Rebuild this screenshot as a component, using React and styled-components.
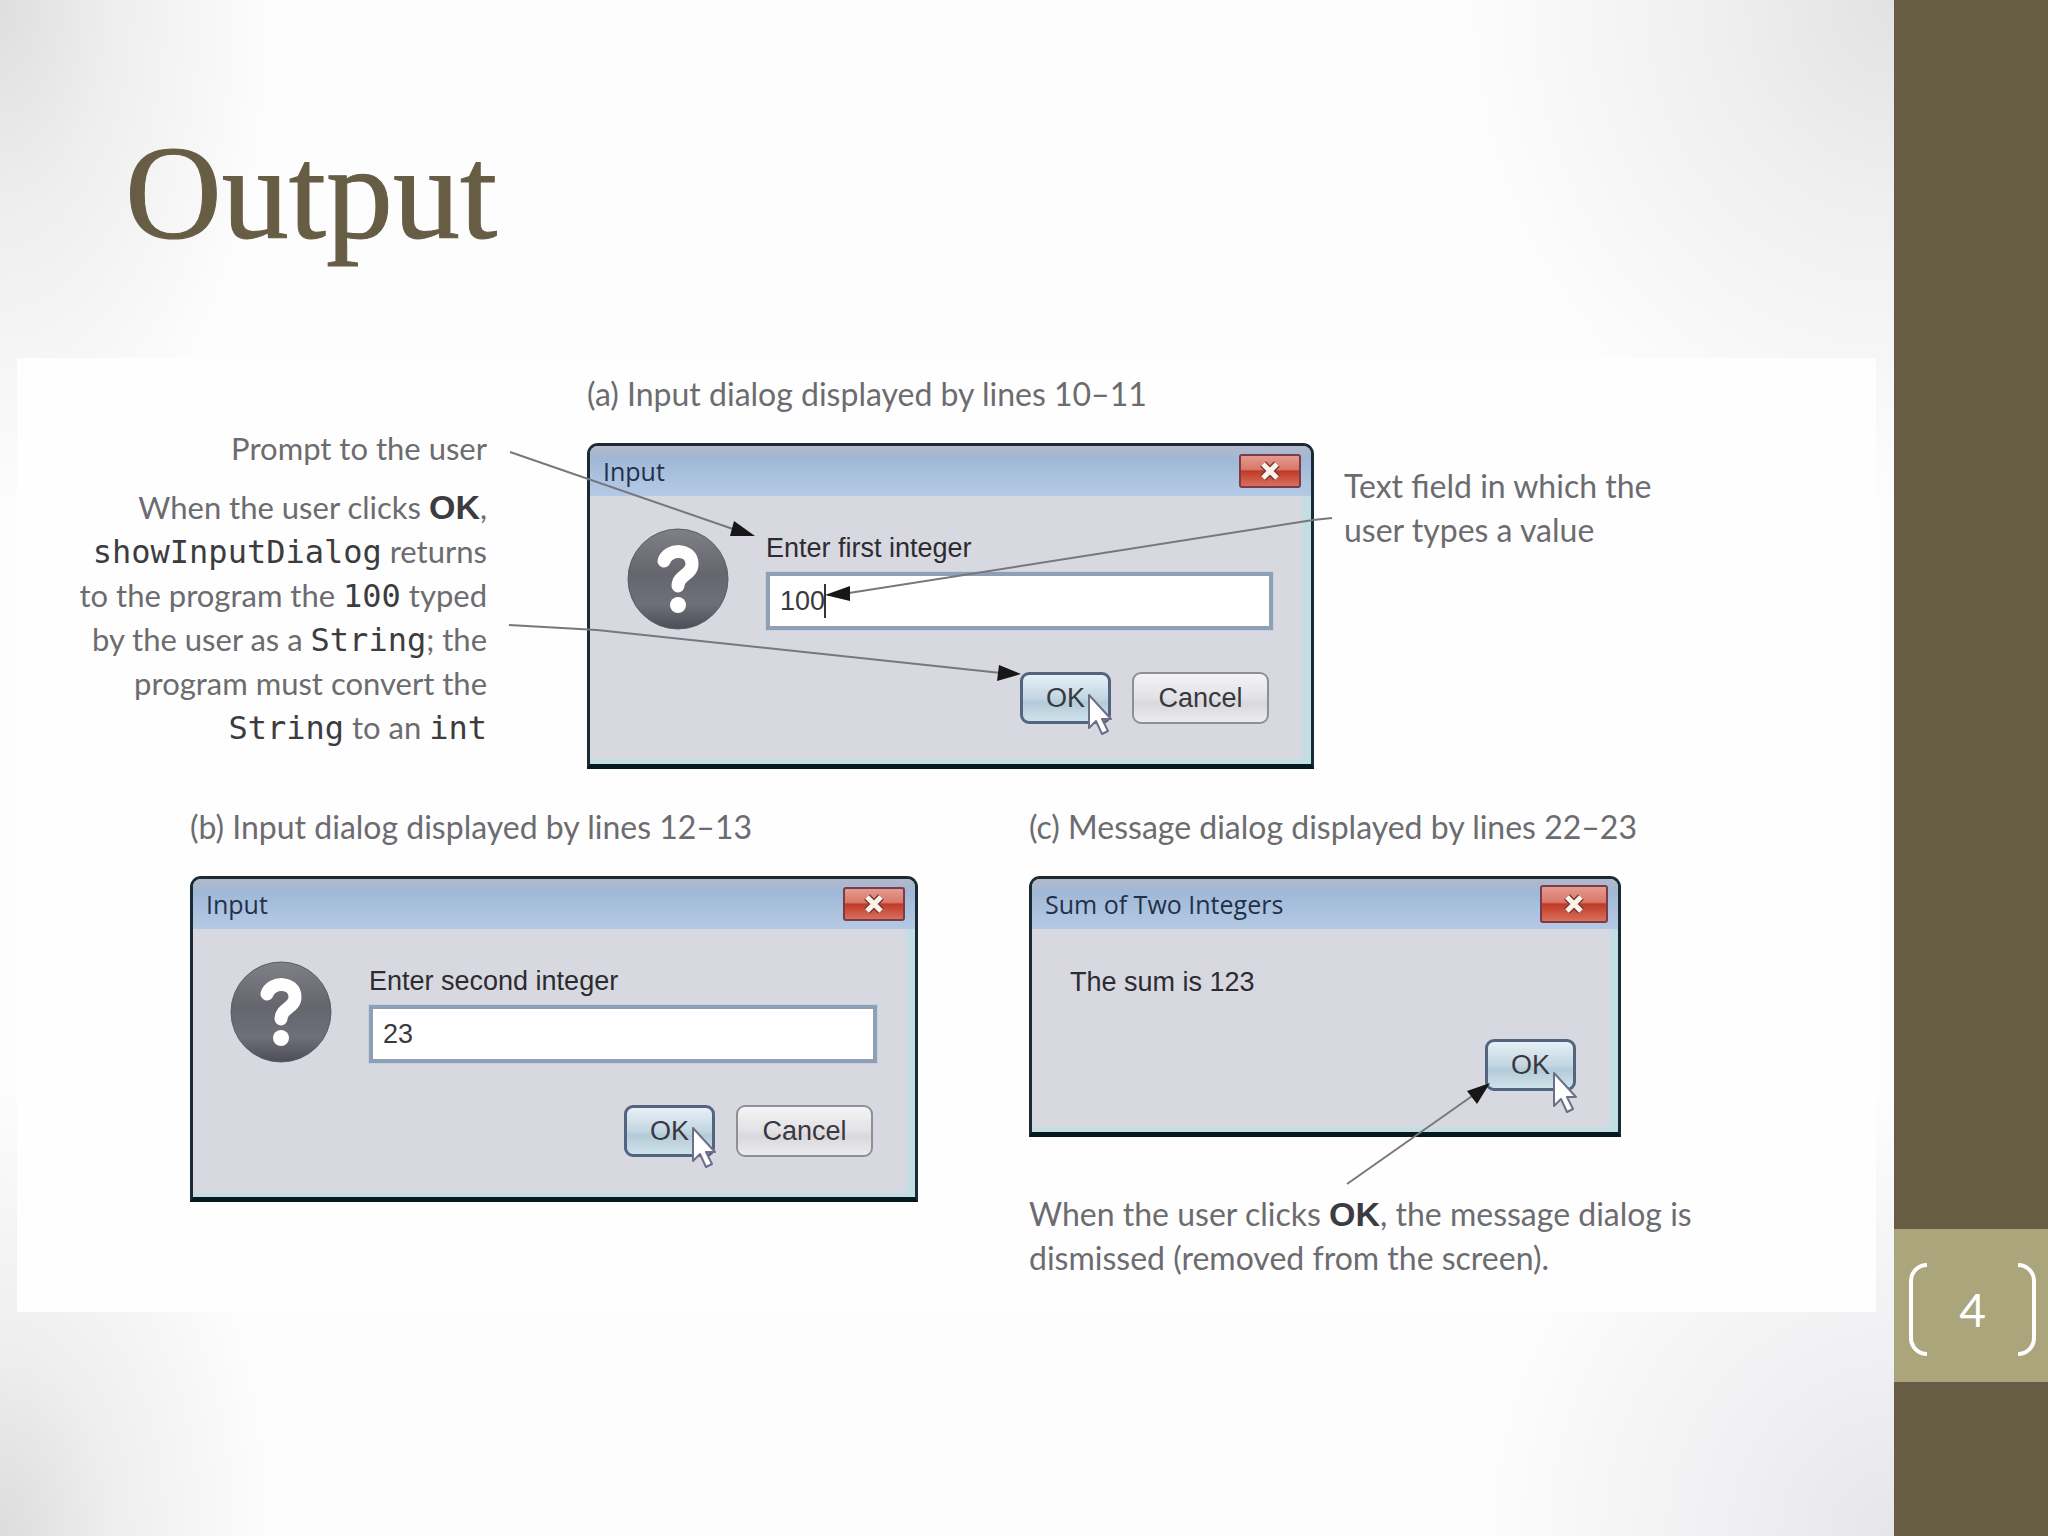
import React from 'react';
import styled, { createGlobalStyle } from 'styled-components';

const Cursor = ({ low }) => (
    <CursorSvg viewBox="0 0 24 42" aria-hidden="true" $low={low}>
        <path
            d="M1 1 L1 34 L8 27 L14 40 L20 37 L14 25 L23 25 Z"
            fill="#fff"
            stroke="#6d6f88"
            strokeWidth="2"
            strokeLinejoin="round"
        />
    </CursorSvg>
);

const QuestionIcon = () => (
    <IconSvg viewBox="0 0 102 102" aria-hidden="true">
        <defs>
            <linearGradient id="ball" x1="0" y1="0" x2="0" y2="1">
                <stop offset="0" stopColor="#808187" />
                <stop offset="0.45" stopColor="#64656d" />
                <stop offset="0.75" stopColor="#6e6f79" />
                <stop offset="1" stopColor="#4c4d56" />
            </linearGradient>
        </defs>
        <circle cx="51" cy="51" r="50" fill="url(#ball)" stroke="#5b5c64" strokeWidth="1" />
        <path
            d="M37 33 C41 20 65 20 65 36 C65 47 51 47 51 58"
            fill="none"
            stroke="#fff"
            strokeWidth="13"
            strokeLinecap="round"
            strokeLinejoin="round"
        />
        <circle cx="51" cy="77" r="8" fill="#fff" />
    </IconSvg>
);

const TitleBar = ({ title, wideClose }) => (
    <Bar>
        <BarTitle>{title}</BarTitle>
        <CloseButton type="button" aria-label="Close" $wide={wideClose}>
            <svg width="26" height="22" viewBox="0 0 26 22" aria-hidden="true">
                <path d="M6 4 L20 18 M20 4 L6 18" stroke="#7a3c3c" strokeWidth="8" />
                <path d="M6 4 L20 18 M20 4 L6 18" stroke="#fbf3ea" strokeWidth="5" />
            </svg>
        </CloseButton>
    </Bar>
);

const OkButton = ({ lowCursor }) => (
    <ButtonWrap>
        <DialogButton type="button" $primary>OK</DialogButton>
        <Cursor low={lowCursor} />
    </ButtonWrap>
);

const InputDialog = ({ id, label, value }) => (
    <Window>
        <TitleBar title="Input" />
        <InputBody>
            <QuestionIcon />
            <Field>
                <FieldLabel htmlFor={id}>{label}</FieldLabel>
                <FieldInput id={id} type="text" defaultValue={value} />
            </Field>
        </InputBody>
        <ButtonRow>
            <OkButton />
            <DialogButton type="button">Cancel</DialogButton>
        </ButtonRow>
    </Window>
);

const MessageDialog = () => (
    <Window>
        <TitleBar title="Sum of Two Integers" wideClose />
        <Message>The sum is 123</Message>
        <ButtonRow $message>
            <OkButton lowCursor />
        </ButtonRow>
    </Window>
);

// pointer lines from the notes to the parts of the dialogs
const arrows = [
    { line: 'M493 94 L716 171', head: 'M738 178 L713 178 L717 163 Z' },
    { line: 'M492 267 L580 272 L984 315', head: 'M1004 316 L980 323 L982 307 Z' },
    { line: 'M1315 160 L1296 162 L832 235', head: 'M808 237 L833 228 L833 243 Z' },
    { line: 'M1330 826 L1458 736', head: 'M1473 725 L1460 746 L1450 733 Z' },
];

const Arrows = () => (
    <ArrowLayer aria-hidden="true">
        {arrows.map((arrow) => (
            <g key={arrow.line}>
                <path d={arrow.line} fill="none" stroke="#77777d" strokeWidth="2" />
                <path d={arrow.head} fill="#17171a" />
            </g>
        ))}
        {/* text caret */}
        <path d="M808 226 V260" stroke="#333" strokeWidth="2" />
    </ArrowLayer>
);

const App = () => {
    return (
        <React.Fragment>
            <GlobalStyle />
            <Slide>
                <Main>
                    <Title>Output</Title>
                    <Panel>
                        <TopRow>
                            <LeftNotes>
                                <Note $small>Prompt to the user</Note>
                                <Note $small>
                                    When the user clicks <Key>OK</Key>,<br />
                                    <Code>showInputDialog</Code> returns<br />
                                    to the program the <Code>100</Code> typed<br />
                                    by the user as a <Code>String</Code>; the<br />
                                    program must convert the<br />
                                    <Code>String</Code> to an <Code>int</Code>
                                </Note>
                            </LeftNotes>
                            <Figure $size="727px">
                                <Caption>(a) Input dialog displayed by lines 10–11</Caption>
                                <InputDialog id="first" label="Enter first integer" value="100" />
                            </Figure>
                            <RightNotes>
                                <Note>
                                    Text field in which the<br />
                                    user types a value
                                </Note>
                            </RightNotes>
                        </TopRow>
                        <BottomRow>
                            <Figure $size="728px">
                                <Caption>(b) Input dialog displayed by lines 12–13</Caption>
                                <InputDialog id="second" label="Enter second integer" value="23" />
                            </Figure>
                            <Figure $size="592px">
                                <Caption>(c) Message dialog displayed by lines 22–23</Caption>
                                <MessageDialog />
                                <BelowNote>
                                    When the user clicks <Key>OK</Key>, the message dialog is<br />
                                    dismissed (removed from the screen).
                                </BelowNote>
                            </Figure>
                        </BottomRow>
                        <Arrows />
                    </Panel>
                </Main>
                <Rail>
                    <PageBox>
                        <Bracket />
                        <PageNumber>4</PageNumber>
                        <Bracket $right />
                    </PageBox>
                </Rail>
            </Slide>
        </React.Fragment>
    );
};

export default App;

const GlobalStyle = createGlobalStyle`
    * {
        box-sizing: border-box;
    }
    body {
        margin: 0;
        background: #fdfdfd;
    }
`;

const Slide = styled.div`
    display: flex;
    min-height: 100vh;
    font-family: Lato, "Liberation Sans", sans-serif;
`;

const Main = styled.main`
    flex: 1;
    padding: 113px 18px 0 17px;
    background:
        radial-gradient(ellipse 280px 520px at 0 0, #dedede, #eeeeee 40%, #fdfdfd00),
        radial-gradient(ellipse 280px 460px at 0 100%, #dcdcdc, #eeeeee 40%, #fdfdfd00),
        radial-gradient(ellipse 440px 500px at 100% 0, #e2e2e2, #efefef 40%, #fdfdfd00),
        radial-gradient(ellipse 420px 440px at 100% 100%, #e6e5e7, #f0eff1 40%, #fdfdfd00),
        #fdfdfd;
`;

const Title = styled.h1`
    margin: 0 0 85px;
    padding-left: 108px;
    font-family: "Liberation Serif", serif;
    font-size: 134px;
    font-weight: 400;
    line-height: 160px;
    color: #675d45;
    -webkit-text-stroke: 1px #675d45;
`;

const Panel = styled.div`
    position: relative;
    padding: 14px 0 32px;
    background: #fefefe;
`;

const TopRow = styled.div`
    display: flex;
`;

const BottomRow = styled.div`
    display: flex;
    gap: 111px;
    margin-top: 36px;
    padding-left: 173px;
`;

const LeftNotes = styled.div`
    display: flex;
    flex-direction: column;
    gap: 15px;
    width: 470px;
    margin-right: 100px;
    padding-top: 54px;
    text-align: right;
`;

const RightNotes = styled.div`
    padding: 92px 0 0 30px;
`;

const Figure = styled.section`
    width: ${(props) => props.$size};
`;

const Note = styled.p`
    margin: 0;
    font-size: ${(props) => (props.$small ? '31px' : '32px')};
    line-height: 44px;
    white-space: nowrap;
    color: #6c6c70;
`;

const BelowNote = styled(Note)`
    margin-top: 55px;
`;

const Caption = styled.h2`
    margin: 0 0 27px;
    font-size: 32px;
    font-weight: 400;
    line-height: 44px;
    white-space: nowrap;
    color: #6c6c70;
`;

const Key = styled.b`
    font-family: "Liberation Sans", sans-serif;
    font-size: 34px;
    line-height: 1;
    color: #3c3c40;
`;

const Code = styled.code`
    font-family: "DejaVu Sans Mono", monospace;
    font-size: 32px;
    line-height: 1;
    color: #3c3c40;
`;

const Window = styled.div`
    display: flex;
    flex-direction: column;
    border: 3px solid #1b2a33;
    border-bottom: 5px solid #06191f;
    border-radius: 11px 11px 0 0;
    background: #d8d8e1;
    box-shadow: inset -10px -6px 4px -2px #bfdfe2;
    font-family: "Liberation Sans", sans-serif;
`;

const Bar = styled.div`
    display: flex;
    align-items: center;
    justify-content: space-between;
    height: 50px;
    padding: 0 10px 0 13px;
    border-radius: 8px 8px 0 0;
    background: linear-gradient(#b4b9c8, #9fb8d6 25%, #a9c0dd 55%, #b4c9e4);
`;

const BarTitle = styled.span`
    font-family: "Open Sans", sans-serif;
    font-size: 25px;
    line-height: 34px;
    color: #22304a;
`;

const CloseButton = styled.button`
    display: flex;
    align-items: center;
    justify-content: center;
    width: ${(props) => (props.$wide ? '68px' : '62px')};
    height: ${(props) => (props.$wide ? '38px' : '34px')};
    padding: 0;
    border: 2px solid #7c3b4a;
    border-radius: 3px;
    background: linear-gradient(#e59a8e, #d9786a 45%, #bf3a26 50%, #d8705c);
`;

const InputBody = styled.div`
    display: flex;
    gap: 37px;
    padding: 30px 38px 0 37px;
`;

const IconSvg = styled.svg`
    flex: none;
    width: 102px;
    height: 102px;
    margin-top: 2px;
`;

const Field = styled.div`
    display: flex;
    flex: 1;
    flex-direction: column;
    gap: 2px;
`;

const FieldLabel = styled.label`
    font-size: 27px;
    line-height: 44px;
    color: #2c2c30;
`;

const FieldInput = styled.input`
    width: 100%;
    height: 58px;
    padding: 0 10px;
    border: 4px solid #8f9fb4;
    outline: 1px solid #c3d3e4;
    background: #fff;
    font-family: inherit;
    font-size: 27px;
    color: #3a3a3e;
`;

const ButtonRow = styled.div`
    display: flex;
    justify-content: flex-end;
    gap: 21px;
    padding: ${(props) => (props.$message ? '39px 42px 41px 0' : '42px 42px 40px 0')};
`;

const ButtonWrap = styled.div`
    position: relative;
`;

const DialogButton = styled.button`
    width: ${(props) => (props.$primary ? '91px' : '137px')};
    height: 52px;
    padding: 0;
    border: ${(props) => (props.$primary ? '3px solid #52647e' : '2px solid #8e9099')};
    border-radius: 9px;
    background: ${(props) =>
        props.$primary
            ? 'linear-gradient(#e6f0f6, #c3d6e2 50%, #b3cbd9 60%, #cfe2ea)'
            : 'linear-gradient(#f4f4f6, #e2e2e6 50%, #d8d8dd 60%, #ececef)'};
    font-family: inherit;
    font-size: 27px;
    color: #38383e;
`;

const CursorSvg = styled.svg`
    position: absolute;
    left: 68px;
    top: ${(props) => (props.$low ? '33px' : '22px')};
    width: 24px;
    height: 42px;
`;

const Message = styled.p`
    margin: 0;
    padding: 35px 0 0 38px;
    font-size: 27px;
    line-height: 36px;
    color: #2c2c30;
`;

const ArrowLayer = styled.svg`
    position: absolute;
    left: 0;
    top: 0;
    width: 100%;
    height: 100%;
    pointer-events: none;
`;

const Rail = styled.aside`
    display: flex;
    flex-direction: column;
    justify-content: flex-end;
    width: 154px;
    padding-bottom: 154px;
    background: #675d45;
`;

const PageBox = styled.div`
    display: flex;
    align-items: center;
    justify-content: space-between;
    padding: 34px 12px 26px 15px;
    background: #aaa57b;
`;

const Bracket = styled.span`
    width: 18px;
    height: 93px;
    border: 4px solid #fff;
    ${(props) =>
        props.$right
            ? 'border-left: 0; border-radius: 0 18px 18px 0;'
            : 'border-right: 0; border-radius: 18px 0 0 18px;'}
`;

const PageNumber = styled.span`
    font-size: 46px;
    line-height: 56px;
    color: #fff;
`;
